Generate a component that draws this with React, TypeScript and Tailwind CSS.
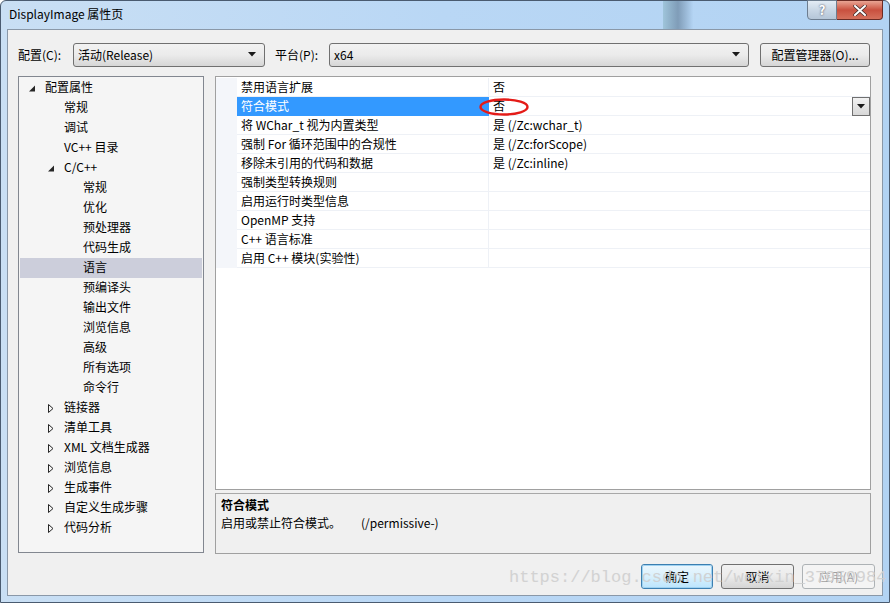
import React from "react";

const FONT = '"Noto Sans CJK SC", "Noto Sans", sans-serif';

function ExpandedTri() {
  return (
    <svg width="7" height="7" viewBox="0 0 7 7" className="shrink-0">
      <polygon points="6,0.5 6,6.5 0,6.5" fill="#262626" />
    </svg>
  );
}

function CollapsedTri() {
  return (
    <svg width="6" height="9" viewBox="0 0 6 9" className="shrink-0">
      <polygon points="0.5,0.5 5,4.5 0.5,8.5" fill="none" stroke="#262626" strokeWidth="1" />
    </svg>
  );
}

type TreeItem = { label: string; level: number; icon?: "exp" | "col"; selected?: boolean };

const tree: TreeItem[] = [
  { label: "配置属性", level: 0, icon: "exp" },
  { label: "常规", level: 1 },
  { label: "调试", level: 1 },
  { label: "VC++ 目录", level: 1 },
  { label: "C/C++", level: 1, icon: "exp" },
  { label: "常规", level: 2 },
  { label: "优化", level: 2 },
  { label: "预处理器", level: 2 },
  { label: "代码生成", level: 2 },
  { label: "语言", level: 2, selected: true },
  { label: "预编译头", level: 2 },
  { label: "输出文件", level: 2 },
  { label: "浏览信息", level: 2 },
  { label: "高级", level: 2 },
  { label: "所有选项", level: 2 },
  { label: "命令行", level: 2 },
  { label: "链接器", level: 1, icon: "col" },
  { label: "清单工具", level: 1, icon: "col" },
  { label: "XML 文档生成器", level: 1, icon: "col" },
  { label: "浏览信息", level: 1, icon: "col" },
  { label: "生成事件", level: 1, icon: "col" },
  { label: "自定义生成步骤", level: 1, icon: "col" },
  { label: "代码分析", level: 1, icon: "col" },
];

const rows: [string, string][] = [
  ["禁用语言扩展", "否"],
  ["符合模式", "否"],
  ["将 WChar_t 视为内置类型", "是 (/Zc:wchar_t)"],
  ["强制 For 循环范围中的合规性", "是 (/Zc:forScope)"],
  ["移除未引用的代码和数据", "是 (/Zc:inline)"],
  ["强制类型转换规则", ""],
  ["启用运行时类型信息", ""],
  ["OpenMP 支持", ""],
  ["C++ 语言标准", ""],
  ["启用 C++ 模块(实验性)", ""],
];

function Combo({ text, className }: { text: string; className: string }) {
  return (
    <div
      className={`h-[24px] flex items-center rounded-[3px] border border-[#707070] bg-gradient-to-b from-[#f2f2f2] via-[#ebebeb] to-[#d6d6d6] pl-[4px] pr-[8px] ${className}`}
    >
      <span className="flex-1 leading-none">{text}</span>
      <svg width="8" height="5" viewBox="0 0 8 5">
        <polygon points="0,0 8,0 4,4.5" fill="#1a1a1a" />
      </svg>
    </div>
  );
}

function Btn({
  children,
  className = "",
  focus = false,
  disabled = false,
}: {
  children: React.ReactNode;
  className?: string;
  focus?: boolean;
  disabled?: boolean;
}) {
  return (
    <div
      className={`flex items-center justify-center rounded-[3px] border ${
        focus ? "border-[#3c7fb1]" : disabled ? "border-[#adb2b5]" : "border-[#707070]"
      } ${
        disabled
          ? "bg-[#f4f4f4] text-[#a0a0a0]"
          : "bg-gradient-to-b from-[#f2f2f2] via-[#ebebeb] to-[#d5d5d5]"
      } ${className}`}
    >
      {focus ? (
        <div className="w-full h-full flex items-center justify-center rounded-[2px] border border-[#9fd2f1] bg-gradient-to-b from-[#eaf6fd] via-[#d9f0fc] to-[#bee6fd]">
          {children}
        </div>
      ) : (
        children
      )}
    </div>
  );
}

export default function App() {
  return (
    <div
      className="relative w-[890px] h-[603px] overflow-hidden text-[12px] text-black"
      style={{ fontFamily: FONT }}
    >
      {/* window frame */}
      <div className="w-full h-full flex flex-col border border-[#4a5b70] rounded-t-[6px] bg-gradient-to-r from-[#c9dff4] via-[#b9d7f5] to-[#b2d3f3]">
        {/* title bar */}
        <div className="h-[28px] flex items-start relative">
          <div className="pl-[8px] pt-[5px] leading-[16px] text-[12px]">DisplayImage 属性页</div>
          <div className="absolute left-[662px] top-0 w-[30px] h-[28px] bg-gradient-to-r from-[#8fb9c9] via-[#5c7790] to-[#b2d3f3] opacity-60" />
          <div className="absolute right-[6px] top-[-1px] flex">
            <div className="w-[30px] h-[20px] rounded-bl-[4px] border border-[#6d7d8f] bg-gradient-to-b from-[#e3ecf5] via-[#c9d7e5] to-[#b5c6d8] flex items-center justify-center text-[13px] font-bold text-white" style={{ textShadow: "0 0 2px #334" }}>
              ?
            </div>
            <div className="w-[46px] h-[20px] rounded-br-[4px] border border-l-0 border-[#6b2b24] bg-gradient-to-b from-[#e8a494] via-[#c9503f] to-[#d5705c] flex items-center justify-center">
              <svg width="14" height="11" viewBox="0 0 14 11">
                <path d="M2 1 L12 10 M12 1 L2 10" stroke="#3a2a2a" strokeWidth="3.4" strokeLinecap="round" />
                <path d="M2 1 L12 10 M12 1 L2 10" stroke="#ffffff" strokeWidth="2" strokeLinecap="round" />
              </svg>
            </div>
          </div>
        </div>
        {/* client area */}
        <div className="flex-1 mx-[6px] mb-[6px] border border-[#8a98a8] bg-[#f0f0f0] flex flex-col pl-[10px] pr-[9px] pt-[12px]">
          {/* config row */}
          <div className="flex items-center h-[25px]">
            <span className="w-[55px] leading-none">配置(C):</span>
            <Combo text="活动(Release)" className="w-[192px]" />
            <span className="ml-[10px] w-[54px] leading-none">平台(P):</span>
            <Combo text="x64" className="w-[420px]" />
            <Btn className="ml-[11px] w-[110px] h-[24px]">
              <span className="leading-none">配置管理器(O)...</span>
            </Btn>
          </div>
          {/* main panes */}
          <div className="flex mt-[9px] h-[478px]">
            {/* tree */}
            <div className="w-[186px] h-[477px] border border-[#828790] bg-[#f5f5f5] pt-[1px] px-[1px]">
              {tree.map((t, i) => (
                <div
                  key={i}
                  className={`h-[20px] flex items-center ${t.selected ? "bg-[#cccedb]" : ""}`}
                  style={{ paddingLeft: 25 + t.level * 19 }}
                >
                  <div className="w-0 relative h-full flex items-center">
                    {t.icon === "exp" && (
                      <div className="absolute right-[9px] top-[7px]">
                        <ExpandedTri />
                      </div>
                    )}
                    {t.icon === "col" && (
                      <div className="absolute right-[10px] top-[6px]">
                        <CollapsedTri />
                      </div>
                    )}
                  </div>
                  <span className="leading-none relative top-[-1px]">{t.label}</span>
                </div>
              ))}
            </div>
            {/* right side */}
            <div className="ml-[11px] w-[656px] flex flex-col">
              <div className="h-[414px] border border-[#a0a0a0] bg-white pt-[1px] relative">
                {rows.map(([name, val], i) => {
                  const sel = i === 1;
                  return (
                    <div key={i} className="h-[19px] flex">
                      <div className="w-[21px] bg-[#f4f6fa]" />
                      <div
                        className={`w-[252px] flex items-center pl-[4px] border-b border-r ${
                          sel ? "bg-[#3399ff] text-white border-[#3399ff]" : "border-[#eef1f6]"
                        }`}
                      >
                        <span className="leading-none">{name}</span>
                      </div>
                      <div className="flex-1 flex items-center pl-[4px] border-b border-[#eef1f6] relative">
                        <span className="leading-none">{val}</span>
                        {sel && (
                          <div className="absolute right-0 top-0 w-[18px] h-[19px] border border-[#707070] bg-gradient-to-b from-[#f2f2f2] to-[#d8d8d8] flex items-center justify-center">
                            <svg width="8" height="5" viewBox="0 0 8 5">
                              <polygon points="0,0 8,0 4,4.5" fill="#1a1a1a" />
                            </svg>
                          </div>
                        )}
                      </div>
                    </div>
                  );
                })}
                {/* red ellipse annotation */}
                <svg
                  className="absolute left-[262px] top-[20px]"
                  width="52"
                  height="20"
                  viewBox="0 0 52 20"
                >
                  <ellipse cx="26" cy="10" rx="23.5" ry="7.5" fill="none" stroke="#e41b17" strokeWidth="2.4" />
                </svg>
              </div>
              <div className="mt-[3px] h-[61px] border border-[#a0a0a0] border-t-[#a8a8a8] bg-[#f0f0f0] px-[5px] pt-[2px]">
                <div className="font-bold leading-[18px]">符合模式</div>
                <div className="leading-[18px] flex">
                  <span>启用或禁止符合模式。</span>
                  <span className="ml-[20px]">(/permissive-)</span>
                </div>
              </div>
            </div>
          </div>
          {/* buttons */}
          <div className="flex justify-end mt-[10px]">
            <Btn focus className="w-[72px] h-[25px]">
              <span className="leading-none">确定</span>
            </Btn>
            <Btn className="ml-[8px] w-[73px] h-[25px]">
              <span className="leading-none">取消</span>
            </Btn>
            <Btn disabled className="ml-[8px] w-[73px] h-[25px] mr-[-2px]">
              <span className="leading-none">应用(A)</span>
            </Btn>
          </div>
        </div>
      </div>
      {/* watermark */}
      <div
        className="absolute left-[509px] top-[566px] text-[17px] leading-[24px] text-[#cfcfcf] opacity-90 pointer-events-none whitespace-pre"
        style={{ fontFamily: '"Liberation Mono", monospace' }}
      >
        https://blog.csdn.net/weixin_37959984
      </div>
    </div>
  );
}
